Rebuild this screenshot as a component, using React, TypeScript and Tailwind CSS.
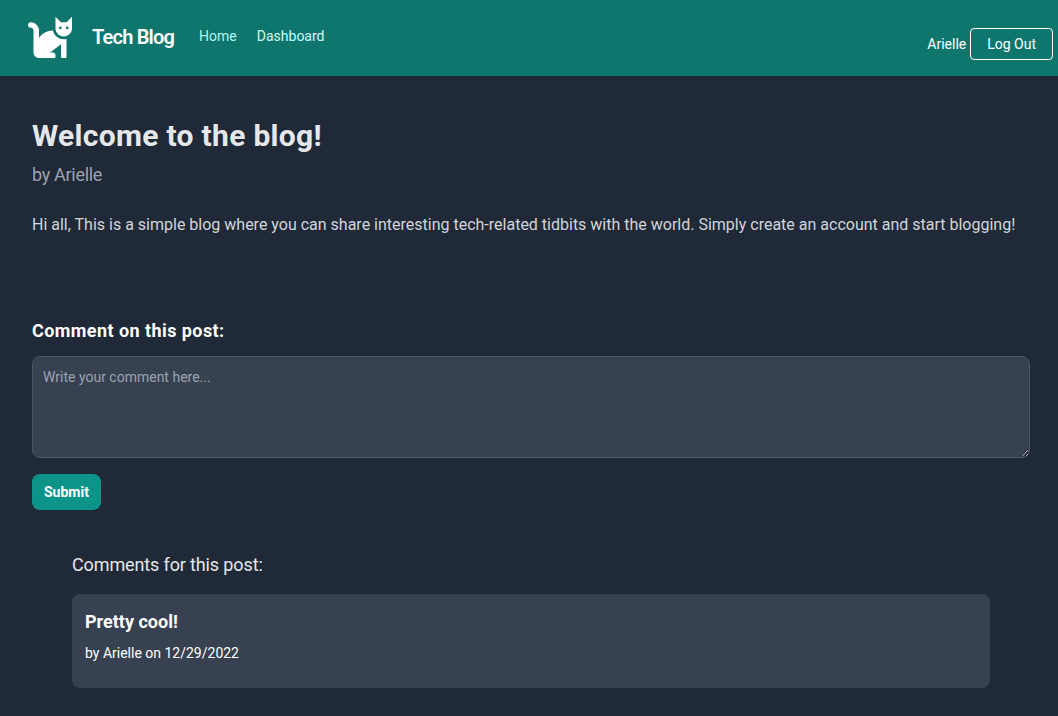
import React from 'react';
import { FaCat } from 'react-icons/fa';

const font = "font-['Roboto','Noto_Sans',sans-serif]";

const Header = () => (
  <header className="flex h-[76px] bg-[#0f766e] text-white">
    <a className="flex items-start pl-7 pt-[14px]">
      <FaCat className="h-[44px] w-[44px] text-white" />
      <span className="ml-5 mt-[9px] text-xl font-semibold leading-7 tracking-[-0.8px]">Tech Blog</span>
    </a>
    <nav className="ml-[25px] flex gap-5 pt-[26px] text-sm leading-5">
      <a className="text-[#b2f5ea]">Home</a>
      <a className="text-[#ccfbf1]">Dashboard</a>
    </nav>
    <div className="ml-auto flex items-start gap-1 pr-[5px] pt-7 text-sm">
      <span className="mt-[6px] leading-5">Arielle</span>
      <button className="h-8 rounded border border-white px-4 leading-5">Log Out</button>
    </div>
  </header>
);

export default function App() {
  return (
    <div className={`min-h-[716px] bg-[#1f2937] text-white ${font}`}>
      <Header />
      <main className="pl-8 pr-7 pt-[42px]">
        <h1 className="text-3xl font-bold leading-9 tracking-[0.3px] text-[#e5e7eb]">Welcome to the blog!</h1>
        <p className="mt-[7px] text-lg leading-7 tracking-[-0.3px] text-[#9ca3af]">by Arielle</p>
        <p className="mt-[24px] text-base leading-6 text-[#d1d5db]">
          Hi all, This is a simple blog where you can share interesting tech-related tidbits with the world. Simply create an account and start blogging!
        </p>
        <h2 className="mt-[80px] text-lg font-bold leading-7 tracking-[0.43px]">Comment on this post:</h2>
        <textarea
          className="mt-[11px] block h-[102px] w-full rounded-lg border border-[#4b5563] bg-[#374151] p-[10px] text-sm text-white placeholder:text-[#9ca3af]"
          placeholder="Write your comment here..."
        />
        <button className="mt-4 h-9 rounded-lg bg-[#0d9488] px-3 text-sm font-bold">Submit</button>
        <section className="px-10 pt-[41px]">
          <h3 className="text-lg leading-7 tracking-[-0.13px] text-[#e5e7eb]">Comments for this post:</h3>
          <div className="mt-[15px] h-[94px] rounded-lg bg-[#374151] px-[13px] pt-[14px]">
            <h4 className="text-lg font-bold leading-7">Pretty cool!</h4>
            <p className="mt-[7px] text-sm leading-5">by Arielle on 12/29/2022</p>
          </div>
        </section>
      </main>
    </div>
  );
}
